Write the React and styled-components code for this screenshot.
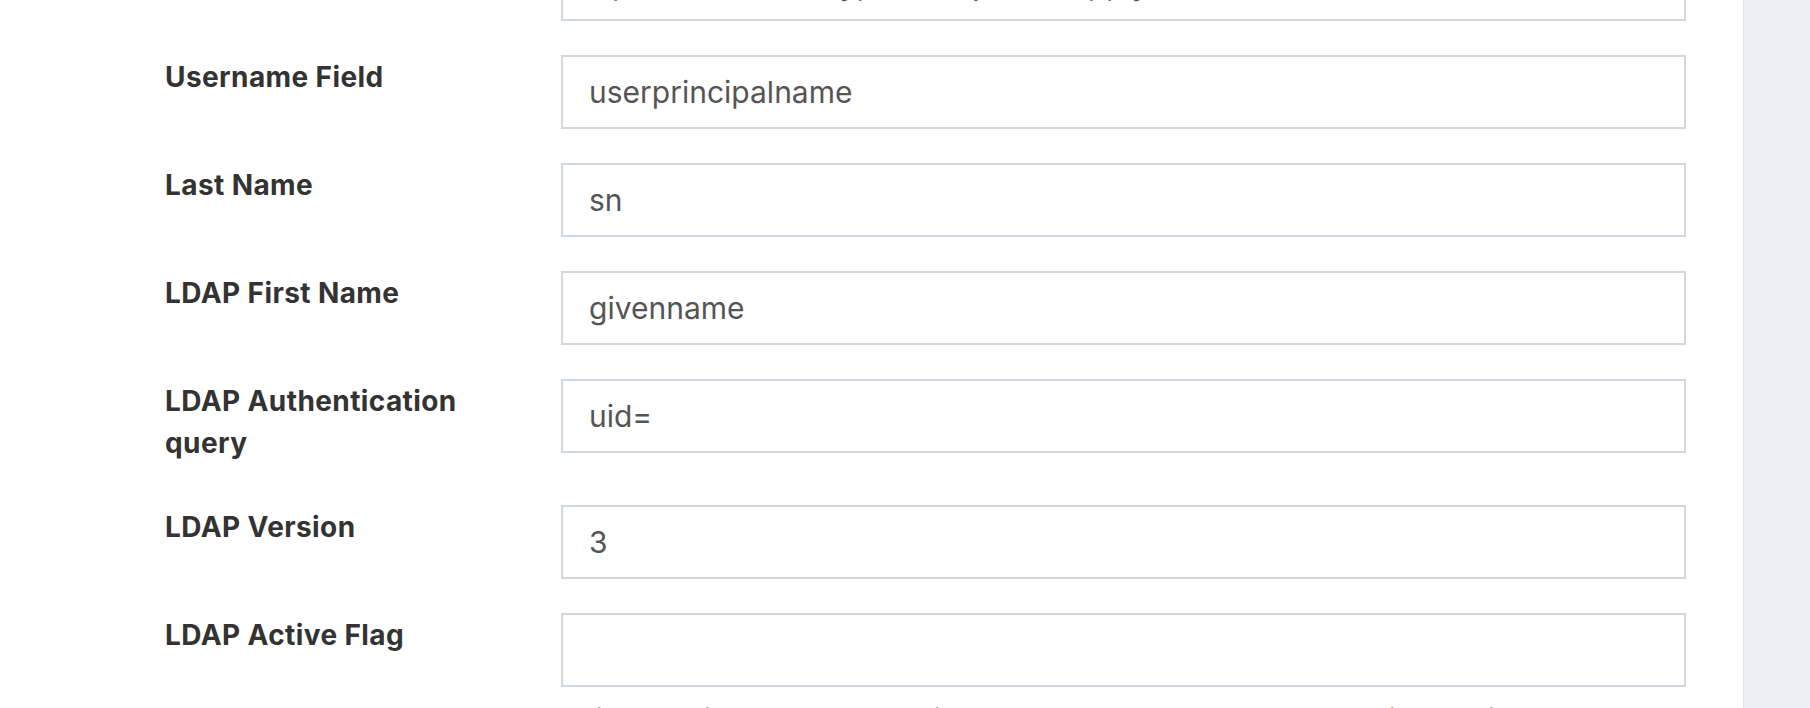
import React from "react";
import styled, { createGlobalStyle } from "styled-components";

const Global = createGlobalStyle`
  html, body { margin: 0; padding: 0; background: #ecf0f5; }
  body { font-family: Inter, "Liberation Sans", sans-serif; overflow: hidden; }
  * { box-sizing: border-box; }
`;

const Page = styled.div`
  display: flex;
  height: 708px;
  overflow: hidden;
`;

const Box = styled.div`
  flex: 0 0 1743px;
  background: #ffffff;
  padding: 0 57px 0 165px;
  overflow: hidden;
`;

const Side = styled.div`
  flex: 1;
  background: #ecf0f5;
  border-left: 1px solid #e1e5eb;
`;

const Form = styled.div`
  margin-top: -53px;
  display: flex;
  flex-direction: column;
`;

const Row = styled.div`
  display: grid;
  grid-template-columns: 396px minmax(0, 1fr);
  align-items: start;
  margin-bottom: 34px;
`;

const Label = styled.label`
  font-size: 28px;
  font-weight: 700;
  letter-spacing: 0.4px;
  color: #333333;
  line-height: 41.6px;
  margin-top: 2px;
  padding: 0 40px 7px 0;
`;

const Field = styled.div`
  display: flex;
  flex-direction: column;
  min-width: 0;
`;

const Input = styled.input`
  width: 100%;
  height: 74px;
  border: 2px solid #d2d6de;
  border-radius: 0;
  padding: 0 26px;
  font-family: Inter, "Liberation Sans", sans-serif;
  font-size: 30px;
  color: #555555;
  background: #fff;
  outline: none;
`;

const Help = styled.p`
  margin: 12px 0 0;
  font-size: 28px;
  line-height: 40px;
  color: #737373;
  overflow: hidden;
`;

const fields = [
  { label: "LDAP Filter", value: "Optional: set the type of object to apply" },
  { label: "Username Field", value: "userprincipalname" },
  { label: "Last Name", value: "sn" },
  { label: "LDAP First Name", value: "givenname" },
  { label: "LDAP Authentication query", value: "uid=" },
  { label: "LDAP Version", value: "3" },
  {
    label: "LDAP Active Flag",
    value: "",
    help:
      "This value is used to determine whether a synced user can login to Snipe-IT. It does not affect the ability to check items in or out to them.",
  },
];

export default function App() {
  return (
    <>
      <Global />
      <Page>
        <Box>
          <Form>
            {fields.map((f) => (
              <Row key={f.label}>
                <Label>{f.label}</Label>
                <Field>
                  <Input defaultValue={f.value} readOnly />
                  {f.help && <Help>{f.help}</Help>}
                </Field>
              </Row>
            ))}
          </Form>
        </Box>
        <Side />
      </Page>
    </>
  );
}
